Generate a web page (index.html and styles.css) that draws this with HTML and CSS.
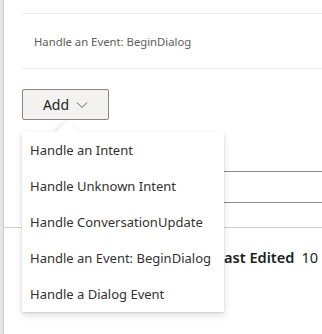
FILE: index.html
```html
<!DOCTYPE html>
<html>
<head>
<meta charset="utf-8">
<link rel="stylesheet" href="styles.css">
</head>
<body>
<div class="frame">
  <div class="rail"></div>
  <div class="main">
    <div class="content">
      <div class="trigger-row">Handle an Event: BeginDialog</div>
      <div class="add-wrap">
        <button class="add-btn">Add
          <svg class="chev" width="12" height="8" viewBox="0 0 12 8"><path d="M1 1.5 L6 6.5 L11 1.5" fill="none" stroke="#605e5c" stroke-width="1"/></svg>
        </button>
        <div class="menu">
          <div class="beak"></div>
          <ul class="menu-list">
            <li>Handle an Intent</li>
            <li>Handle Unknown Intent</li>
            <li>Handle ConversationUpdate</li>
            <li>Handle an Event: BeginDialog</li>
            <li>Handle a Dialog Event</li>
          </ul>
        </div>
      </div>
      <div class="field f1"></div>
      <div class="field f2"></div>
    </div>
    <div class="details">
      <div class="detail-row"><span class="label">Last Edited</span><span class="value">10</span></div>
    </div>
  </div>
</div>
</body>
</html>
```
FILE: styles.css
```css
html, body { margin: 0; padding: 0; background: #fff; overflow: hidden; }
body { font-family: "Noto Sans", "Open Sans", sans-serif; color: #323130; }
.frame { display: flex; height: 334px; width: 322px; }
.rail { width: 3px; background: #e6e6e6; border-right: 1px solid #c8c6c4; flex: none; }
.main { flex: 1; display: flex; flex-direction: column; min-width: 0; }
.content { padding: 13px 0 0 18px; }
.trigger-row {
  border-top: 1px solid #edebe9; border-bottom: 1px solid #edebe9;
  height: 54px; display: flex; align-items: center; padding-left: 12px;
  font-size: 11.3px; color: #605e5c;
}
.add-wrap { position: relative; margin-top: 20px; height: 31px; }
.add-btn {
  box-sizing: border-box; width: 87px; height: 31px; margin: 0;
  background: #f3f2f1; border: 1px solid #8a8886; border-radius: 2px;
  font-family: inherit; font-size: 14px; color: #201f1e;
  display: flex; align-items: center; justify-content: center; gap: 7px; padding: 0 0 1px 0;
}
.chev { margin-top: 1px; }
.menu {
  position: absolute; left: 0; top: 43px; width: 202px; z-index: 5;
  background: #fff;
  box-shadow: 0 3.2px 7.2px rgba(0,0,0,.132), 0 0.6px 1.8px rgba(0,0,0,.108);
}
.beak {
  position: absolute; left: 37px; top: -8px; width: 16px; height: 16px;
  background: #fff; transform: rotate(45deg);
  box-shadow: 0 3.2px 7.2px rgba(0,0,0,.132), 0 0.6px 1.8px rgba(0,0,0,.108);
  z-index: -1;
}
.menu-list { list-style: none; margin: 0; padding: 0; position: relative; background: #fff; }
.menu-list li { height: 36px; line-height: 36px; padding-left: 8px; font-size: 13px; color: #323130; white-space: nowrap; }
.field { height: 0; border-bottom: 1px solid #8a8886; }
.f1 { margin-top: 51px; }
.f2 { margin-top: 30px; }
.details { border-top: 1px solid #d2d0ce; margin-top: 24px; padding-top: 19px; padding-left: 212px; }
.detail-row { display: flex; gap: 7px; font-size: 14.6px; white-space: nowrap; }
.label { font-weight: 600; color: #201f1e; }
.value { color: #201f1e; }
```
